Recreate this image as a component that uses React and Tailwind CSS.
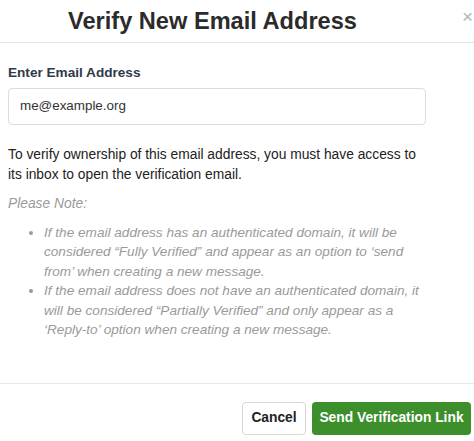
import React from "react";

export default function App() {
  return (
    <div className="w-[474px] h-[441px] overflow-hidden bg-white text-[#222] font-['Liberation_Sans',Arial,sans-serif] relative">
      <div className="h-[43px] border-b border-[#e3e3e3] flex items-center relative">
        <h1 className="pl-[68px] pt-[1px] text-[23.6px] font-bold text-[#2b2b2b] leading-none">Verify New Email Address</h1>
        <span className="absolute right-[1px] top-[7px] text-[19px] text-[#b5b5b5] leading-none">×</span>
      </div>
      <div className="h-[341px] border-b border-[#e8e8e8] px-[8px] pt-[20px]">
        <label className="block text-[13.6px] font-bold text-[#2f3a48] leading-[20px]">Enter Email Address</label>
        <div className="mt-[5px] w-[418px] h-[37px] border border-[#dcdcdc] rounded-[4px] flex items-center px-[11px] text-[13.4px] text-[#333]">
          me@example.org
        </div>
        <p className="mt-[20px] w-[418px] text-[13.8px] leading-[19.5px] text-[#222]">
          To verify ownership of this email address, you must have access to its inbox to open the verification email.
        </p>
        <p className="mt-[10px] text-[13.8px] leading-[19.5px] italic text-[#9a9a9a]">Please Note:</p>
        <ul className="mt-[9px] pl-[36px] pr-[38px] list-disc text-[13.6px] leading-[19.5px] italic text-[#9a9a9a]">
          <li>If the email address has an authenticated domain, it will be considered “Fully Verified” and appear as an option to ‘send from’ when creating a new message.</li>
          <li>If the email address does not have an authenticated domain, it will be considered “Partially Verified” and only appear as a ‘Reply-to’ option when creating a new message.</li>
        </ul>
      </div>
      <div className="flex justify-end gap-[6px] pr-[3px] pt-[18px]">
        <button className="h-[33px] w-[64px] border border-[#d6d6d6] rounded-[4px] bg-white text-[13.8px] font-bold text-[#222]">Cancel</button>
        <button className="h-[33px] w-[159px] rounded-[4px] bg-[#3d8f2b] text-[13.8px] font-bold text-white">Send Verification Link</button>
      </div>
    </div>
  );
}
